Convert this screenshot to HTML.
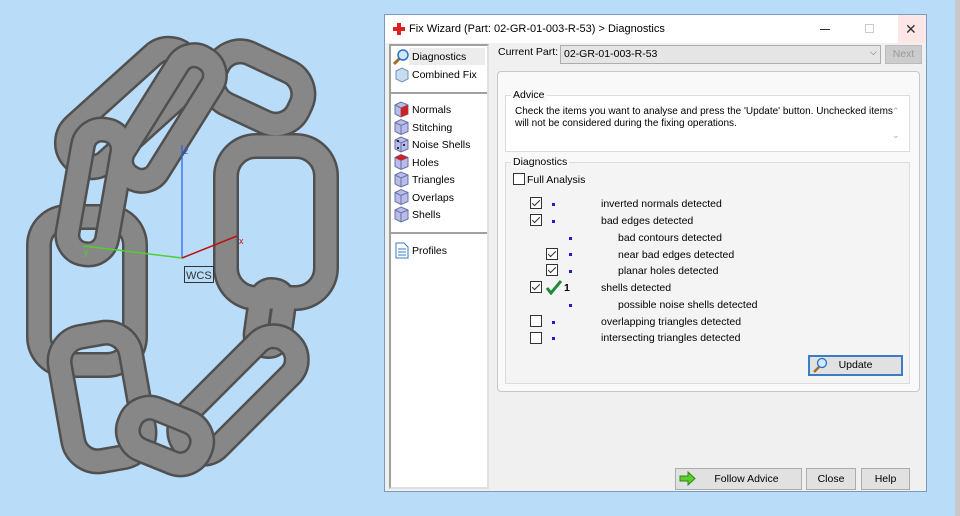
<!DOCTYPE html>
<html><head><meta charset="utf-8"><style>
*{margin:0;padding:0;box-sizing:border-box}
body{width:960px;height:516px;overflow:hidden;background:#b9dcf8;font-family:"Liberation Sans",sans-serif;font-size:11px;color:#000;position:relative}
.a{position:absolute}
.t{position:absolute;white-space:nowrap;font-size:10.5px}
.cb{position:absolute;width:12px;height:12px;border:1px solid #333;background:#fff}
.cb.k::after{content:"";position:absolute;left:3px;top:0px;width:3px;height:7px;border:solid #333;border-width:0 1.3px 1.3px 0;transform:rotate(45deg)}
.dot{position:absolute;width:3px;height:3px;background:#2020c0}
.btn{position:absolute;border:1px solid #adadad;background:#e1e1e1;text-align:center;font-size:10.5px}
</style></head><body>
<svg class="a" style="left:0;top:0" width="384" height="516">
<defs>
<g id="L1"><rect x="-48" y="-74" width="96" height="148" rx="28" transform="translate(87 291)"/></g>
<g id="L2"><rect x="-20" y="-63" width="40" height="126" rx="19" transform="translate(95 192) rotate(10)"/></g>
<g id="L3"><rect x="-76" y="-24" width="152" height="48" rx="23" transform="translate(130 108) rotate(-42)"/></g>
<g id="L4"><rect x="-70" y="-20" width="140" height="40" rx="19" transform="translate(168 118) rotate(-58)"/></g>
<g id="L5"><rect x="-46" y="-28" width="92" height="56" rx="25" transform="translate(258 88) rotate(25)"/></g>
<g id="L6"><rect x="-50" y="-76" width="100" height="152" rx="30" transform="translate(276 222)"/></g>
<g id="L7"><rect x="-73" y="-23" width="146" height="46" rx="22" transform="translate(238 395) rotate(-45)"/></g>
<g id="L8"><rect x="-36" y="-63" width="72" height="126" rx="25" transform="translate(102 397) rotate(-10)"/></g>
<g id="L9"><rect x="-38" y="-22" width="76" height="44" rx="21" transform="translate(165 436) rotate(22)"/></g>
<g id="L10"><rect x="-12" y="-28" width="24" height="56" rx="11" transform="translate(270 318) rotate(8)"/></g>
</defs>
<g fill="none">
<g stroke="#505050" stroke-width="26"><use href="#L3"/><use href="#L5"/><use href="#L1"/><use href="#L6"/><use href="#L10"/></g>
<g stroke="#878787" stroke-width="21"><use href="#L3"/><use href="#L5"/><use href="#L1"/><use href="#L6"/><use href="#L10"/></g>
<g stroke="#505050" stroke-width="26"><use href="#L4"/><use href="#L2"/><use href="#L8"/><use href="#L7"/></g>
<g stroke="#878787" stroke-width="21"><use href="#L4"/><use href="#L2"/><use href="#L8"/><use href="#L7"/></g>
<g stroke="#505050" stroke-width="26"><use href="#L9"/></g>
<g stroke="#878787" stroke-width="21"><use href="#L9"/></g>
</g>
<line x1="182" y1="145" x2="182" y2="258" stroke="#2a5ff0" stroke-width="1.2"/>
<text x="184" y="154" font-size="9" fill="#2a5ff0" font-family="Liberation Sans">z</text>
<line x1="182" y1="258" x2="84" y2="246" stroke="#50d030" stroke-width="1.5"/>
<text x="84" y="255" font-size="9" fill="#50d030" font-family="Liberation Sans">y</text>
<line x1="182" y1="258" x2="237" y2="236" stroke="#c01010" stroke-width="1.5"/>
<text x="239" y="244" font-size="9" fill="#c01010" font-family="Liberation Sans">x</text>
<rect x="184.5" y="266.5" width="29" height="16" fill="#b9dcf8" stroke="#333"/>
<text x="186" y="279" font-size="11" fill="#333" font-family="Liberation Sans">WCS</text>
</svg>

<div class="a" style="left:384px;top:14px;width:543px;height:478px;background:#f0f0f0;border:1px solid #7a9cc0">
 <div class="a" style="left:0;top:0;width:541px;height:28px;background:#fff"></div>
 <div class="a" style="left:8px;top:12px;width:12px;height:4px;background:#e02020"></div>
 <div class="a" style="left:12px;top:8px;width:4px;height:12px;background:#e02020"></div>
 <div class="t" style="left:24px;top:8px;font-size:11px">Fix Wizard (Part: 02-GR-01-003-R-53) &gt; Diagnostics</div>
 <div class="a" style="left:435px;top:14px;width:10px;height:1px;background:#333"></div>
 <div class="a" style="left:480px;top:9px;width:9px;height:9px;border:1px solid #ccc"></div>
 <div class="a" style="left:513px;top:0;width:28px;height:28px;background:#fde6e6"></div>
 <div class="t" style="left:520px;top:6px;font-size:14px;color:#333">✕</div>

 <div class="a" style="left:4px;top:29px;width:100px;height:445px;background:#fff;border:2px solid #a0a0a0;border-right-color:#e0e0e0;border-bottom-color:#e0e0e0"></div>
 <div class="a" style="left:6px;top:77px;width:96px;height:2px;background:#a0a0a0"></div>
 <div class="a" style="left:6px;top:217px;width:96px;height:2px;background:#a0a0a0"></div>
 <div class="a" style="left:24px;top:33px;width:76px;height:17px;background:#ececec"></div>
 <svg class="a" style="left:7px;top:33px" width="18" height="18"><line x1="2" y1="16" x2="8" y2="10" stroke="#a07020" stroke-width="3"/><circle cx="11" cy="7" r="5" fill="#cfe8ff" stroke="#2a70c0" stroke-width="1.5"/></svg>
 <div class="t" style="left:27px;top:36px">Diagnostics</div>
 <svg class="a" style="left:9px;top:52px" width="16" height="16"><path d="M2 4l6-3 6 3v8l-6 3-6-3z" fill="#c8dcf0" stroke="#7090b0"/></svg>
 <div class="t" style="left:27px;top:54px">Combined Fix</div>
 <svg class="a" style="left:8px;top:86px" width="18" height="142">
  <defs><g id="cu"><path d="M2 4l6-3 7 3v9l-7 3-6-3z" fill="#b8bce8" stroke="#6a70a8"/><path d="M8 7v9M2 4l6 3 7-3" stroke="#6a70a8" fill="none"/></g></defs>
  <use href="#cu"/><path d="M8 7l7-3v9l-7 3z" fill="#d02020"/>
  <use href="#cu" y="17.5"/><use href="#cu" y="35"/><circle cx="5" cy="40" r="1" fill="#000"/><circle cx="11" cy="44" r="1" fill="#000"/><circle cx="5" cy="47" r="1" fill="#000"/>
  <use href="#cu" y="52.5"/><path d="M2 56.5l6-3 7 3-7 3z" fill="#d02020"/>
  <use href="#cu" y="70"/><use href="#cu" y="87.5"/><use href="#cu" y="105"/>
 </svg>
 <div class="t" style="left:27px;top:89px">Normals</div>
 <div class="t" style="left:27px;top:107px">Stitching</div>
 <div class="t" style="left:27px;top:124px">Noise Shells</div>
 <div class="t" style="left:27px;top:142px">Holes</div>
 <div class="t" style="left:27px;top:159px">Triangles</div>
 <div class="t" style="left:27px;top:177px">Overlaps</div>
 <div class="t" style="left:27px;top:194px">Shells</div>
 <svg class="a" style="left:10px;top:227px" width="14" height="17"><path d="M1 1h8l4 4v11H1z" fill="#fff" stroke="#3a7ac0"/><path d="M3 7h8M3 10h8M3 13h8" stroke="#3a7ac0"/></svg>
 <div class="t" style="left:27px;top:230px">Profiles</div>

 <div class="t" style="left:113px;top:31px">Current Part:</div>
 <div class="a" style="left:175px;top:30px;width:321px;height:19px;background:#e5e5e5;border:1px solid #adadad"></div>
 <div class="t" style="left:179px;top:33px">02-GR-01-003-R-53</div>
 <div class="t" style="left:485px;top:32px;font-size:9px;color:#555">⌵</div>
 <div class="btn" style="left:500px;top:30px;width:37px;height:19px;color:#9a9a9a;line-height:17px;background:#ccc;border-color:#bbb">Next</div>

 <div class="a" style="left:112px;top:56px;width:423px;height:321px;background:#f9f9f9;border:1px solid #c8c8c8;border-radius:4px"></div>
 <div class="a" style="left:120px;top:80px;width:405px;height:57px;border:1px solid #dcdcdc;background:#fff"></div>
 <div class="t" style="left:126px;top:74px;background:#f9f9f9;padding:0 2px">Advice</div>
 <div class="t" style="left:130px;top:91px;font-size:10px;line-height:12px">Check the items you want to analyse and press the 'Update' button. Unchecked items<br>will not be considered during the fixing operations.</div>
 <div class="t" style="left:507px;top:91px;font-size:9px;color:#aaa">⌃</div>
 <div class="t" style="left:507px;top:115px;font-size:9px;color:#aaa">⌄</div>

 <div class="a" style="left:120px;top:147px;width:405px;height:222px;border:1px solid #dcdcdc;background:#f4f4f4"></div>
 <div class="t" style="left:126px;top:141px;background:#f9f9f9;padding:0 2px">Diagnostics</div>
 <div class="cb" style="left:128px;top:158px"></div>
 <div class="t" style="left:142px;top:159px">Full Analysis</div>

 <div class="cb k" style="left:145px;top:182px"></div><div class="dot" style="left:167px;top:188px"></div><div class="t" style="left:216px;top:183px">inverted normals detected</div>
 <div class="cb k" style="left:145px;top:199px"></div><div class="dot" style="left:167px;top:205px"></div><div class="t" style="left:216px;top:200px">bad edges detected</div>
 <div class="dot" style="left:184px;top:222px"></div><div class="t" style="left:233px;top:217px">bad contours detected</div>
 <div class="cb k" style="left:161px;top:233px"></div><div class="dot" style="left:184px;top:238px"></div><div class="t" style="left:233px;top:234px">near bad edges detected</div>
 <div class="cb k" style="left:161px;top:249px"></div><div class="dot" style="left:184px;top:255px"></div><div class="t" style="left:233px;top:250px">planar holes detected</div>
 <div class="cb k" style="left:145px;top:266px"></div>
 <svg class="a" style="left:161px;top:265px" width="16" height="15"><path d="M1 8l4 5L15 1" fill="none" stroke="#1f8a3a" stroke-width="3"/></svg>
 <div class="t" style="left:179px;top:267px;font-weight:bold">1</div><div class="t" style="left:216px;top:267px">shells detected</div>
 <div class="dot" style="left:184px;top:289px"></div><div class="t" style="left:233px;top:284px">possible noise shells detected</div>
 <div class="cb" style="left:145px;top:300px"></div><div class="dot" style="left:167px;top:306px"></div><div class="t" style="left:216px;top:301px">overlapping triangles detected</div>
 <div class="cb" style="left:145px;top:317px"></div><div class="dot" style="left:167px;top:322px"></div><div class="t" style="left:216px;top:317px">intersecting triangles detected</div>

 <div class="btn" style="left:423px;top:340px;width:95px;height:21px;border:2px solid #3b7dc4;line-height:17px">Update</div>
 <svg class="a" style="left:427px;top:342px" width="17" height="17"><line x1="2" y1="15" x2="7" y2="10" stroke="#a07020" stroke-width="2.5"/><circle cx="10" cy="6" r="4.5" fill="#cfe8ff" stroke="#2a70c0" stroke-width="1.3"/></svg>

 <div class="btn" style="left:290px;top:453px;width:127px;height:22px;line-height:20px;padding-left:16px">Follow Advice</div>
 <svg class="a" style="left:294px;top:456px" width="18" height="15"><path d="M1 5h8V1l7 6.5L9 14v-4H1z" fill="#5ccc30" stroke="#2a8a10"/></svg>
 <div class="btn" style="left:421px;top:453px;width:50px;height:22px;line-height:20px">Close</div>
 <div class="btn" style="left:476px;top:453px;width:49px;height:22px;line-height:20px">Help</div>
</div>
<div class="a" style="left:955px;top:0;width:5px;height:516px;background:#c8c8c8"></div>
</body></html>
